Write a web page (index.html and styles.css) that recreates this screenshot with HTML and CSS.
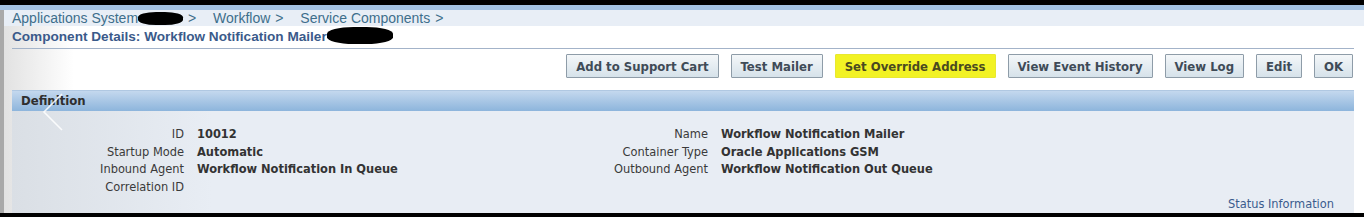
FILE: index.html
```html
<!DOCTYPE html>
<html lang="en">
  <head>
    <meta charset="UTF-8" />
    <title>Component Details: Workflow Notification Mailer</title>
    <link rel="stylesheet" href="styles.css">
  </head>
  <body>
    <div class="topbar"></div>
    <div class="brandline"></div>
    <div class="frame">
      <div class="edge"></div>
      <div class="page">
        <div class="crumbs">
          <a href="#">Applications System</a><span class="blot blot-sm"></span>
          <span class="sep">&gt;</span>
          <a href="#">Workflow</a>
          <span class="sep">&gt;</span>
          <a href="#">Service Components</a>
          <span class="sep">&gt;</span>
        </div>
        <div class="content">
          <h1 class="title">Component Details: Workflow Notification Mailer<span class="blot blot-lg"></span></h1>

          <div class="actions">
            <button class="btn">Add to Support Cart</button>
            <button class="btn">Test Mailer</button>
            <button class="btn btn-marked">Set Override Address</button>
            <button class="btn">View Event History</button>
            <button class="btn">View Log</button>
            <button class="btn">Edit</button>
            <button class="btn">OK</button>
          </div>

          <div class="section">
            <svg class="glare" width="24" height="40" viewBox="0 0 24 40">
              <polyline points="21,2 3,20 21,38" fill="none" stroke="#fff" stroke-width="1.6" stroke-opacity="0.85" />
            </svg>
            <div class="section-head">Definition</div>
            <div class="section-body">
              <div class="fields">
                <span class="lbl">ID</span>
                <span class="val">10012</span>
                <span class="lbl">Name</span>
                <span class="val">Workflow Notification Mailer</span>

                <span class="lbl">Startup Mode</span>
                <span class="val">Automatic</span>
                <span class="lbl">Container Type</span>
                <span class="val">Oracle Applications GSM</span>

                <span class="lbl">Inbound Agent</span>
                <span class="val">Workflow Notification In Queue</span>
                <span class="lbl">Outbound Agent</span>
                <span class="val">Workflow Notification Out Queue</span>

                <span class="lbl">Correlation ID</span>
                <span class="val"></span>
                <span class="lbl"></span>
                <span class="val"></span>
              </div>
              <div class="status"><a href="#">Status Information</a></div>
            </div>
          </div>
        </div>
      </div>
    </div>
    <div class="bottombar"></div>
  </body>
</html>
```

FILE: styles.css
```css
body {
  margin: 0;
  background-color: #fff;
  font-family: "DejaVu Sans Condensed", "DejaVu Sans", sans-serif;
  font-size: 12.7px;
  color: #333;
}
a {
  text-decoration: none;
}
.topbar {
  height: 5px;
  background-color: #000;
}
.brandline {
  height: 5px;
  background-color: #a3c2e2;
}
.frame {
  display: flex;
}
.edge {
  width: 4px;
  background-color: #a9a9a9;
}
.page {
  flex: 1;
  background: linear-gradient(to right, #e2e2e2, #fff 70px);
}
.crumbs {
  height: 16px;
  line-height: 16px;
  padding-left: 8px;
  background-color: #e8eef6;
  font-family: "Liberation Sans", Arial, sans-serif;
  font-size: 14px;
  color: #3e6e8c;
}
.crumbs a {
  color: #3e6e8c;
}
.crumbs .sep {
  margin: 0 13px 0 1px;
}
.blot {
  display: inline-block;
  background-color: #000;
  border-radius: 40%;
  vertical-align: middle;
}
.blot-sm {
  width: 45px;
  height: 13px;
  margin-top: -2px;
}
.blot-lg {
  width: 66px;
  height: 17px;
  margin-top: -3px;
}
.content {
  padding: 0 10px 0 8px;
}
.title {
  margin: 0;
  height: 22px;
  line-height: 22px;
  font-family: "Liberation Sans", Arial, sans-serif;
  font-size: 13.6px;
  font-weight: 700;
  color: #3a5a8a;
  border-bottom: 1px solid #a3b3c9;
}
.actions {
  display: flex;
  justify-content: flex-end;
  gap: 12px;
  margin-top: 5px;
  padding-right: 1px;
}
.btn {
  height: 24px;
  padding: 0 9px;
  font-family: "DejaVu Sans Condensed", "DejaVu Sans", sans-serif;
  font-size: 13px;
  font-weight: 700;
  color: #3f4b57;
  background: linear-gradient(#f4f7f9, #d6e2ea);
  border: 1px solid #8e9ca8;
  border-radius: 1px;
}
.btn-marked {
  background: #f2f224;
  border-color: #e8e830;
  color: #4a4a20;
}
.section {
  position: relative;
  margin-top: 12px;
}
.glare {
  position: absolute;
  left: 29px;
  top: 2px;
}
.section-head {
  height: 20px;
  line-height: 20px;
  padding-left: 9px;
  font-size: 13px;
  font-weight: 700;
  color: #2f2f2f;
  background: linear-gradient(#c4d8ee, #8db5dc);
  border-top: 1px solid #b0c8e2;
}
.section-body {
  height: 102px;
  box-sizing: border-box;
  padding-top: 14px;
  background: linear-gradient(to right, #dadfe5, #e8edf4 200px);
}
.fields {
  display: grid;
  grid-template-columns: 172px 300px 198px 1fr;
  grid-auto-rows: 17.6px;
  column-gap: 13px;
  line-height: 17.6px;
}
.lbl {
  text-align: right;
  color: #3a3a3a;
}
.val {
  font-weight: 700;
  color: #333;
}
.status {
  text-align: right;
  padding-right: 20px;
  margin-top: 1px;
}
.status a {
  color: #3b5c8e;
}
.bottombar {
  height: 5px;
  background-color: #000;
}
```
